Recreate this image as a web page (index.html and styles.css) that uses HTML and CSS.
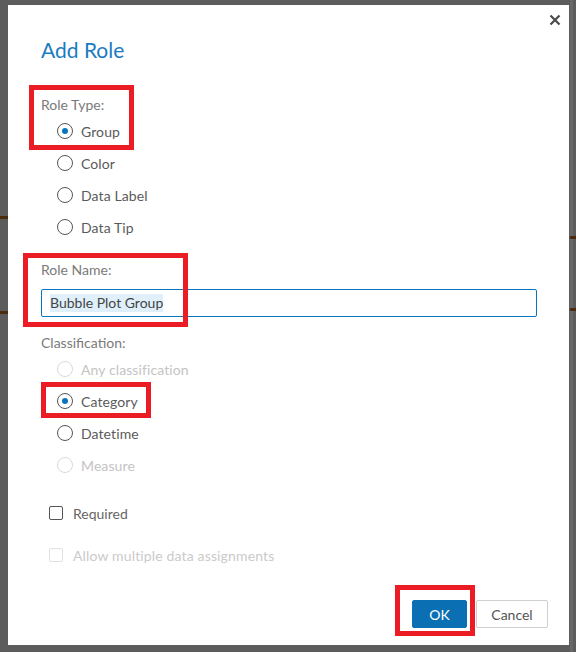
FILE: index.html
```
<!DOCTYPE html>
<html>
<head>
<meta charset="utf-8">
<link rel="stylesheet" href="styles.css">
</head>
<body>
<div class="dialog">
  <button class="close" aria-label="Close">
    <svg width="12" height="12" viewBox="0 0 12 12"><path d="M1.5 1.5 L10.5 10.5 M10.5 1.5 L1.5 10.5" stroke="#4a4a4a" stroke-width="2.2" fill="none"/></svg>
  </button>
  <h1 class="title">Add Role</h1>

  <div class="label">Role Type:</div>
  <div class="radio-group">
    <div class="radio-row checked"><span class="radio"></span><span class="rlabel">Group</span></div>
    <div class="radio-row"><span class="radio"></span><span class="rlabel">Color</span></div>
    <div class="radio-row"><span class="radio"></span><span class="rlabel">Data Label</span></div>
    <div class="radio-row"><span class="radio"></span><span class="rlabel">Data Tip</span></div>
  </div>

  <div class="label label-name">Role Name:</div>
  <div class="input"><span class="sel">Bubble Plot Group</span></div>

  <div class="label label-class">Classification:</div>
  <div class="radio-group">
    <div class="radio-row disabled"><span class="radio"></span><span class="rlabel">Any classification</span></div>
    <div class="radio-row checked"><span class="radio"></span><span class="rlabel">Category</span></div>
    <div class="radio-row"><span class="radio"></span><span class="rlabel">Datetime</span></div>
    <div class="radio-row disabled"><span class="radio"></span><span class="rlabel">Measure</span></div>
  </div>

  <div class="check-row check-required"><span class="check"></span><span class="clabel">Required</span></div>
  <div class="check-row disabled"><span class="check"></span><span class="clabel">Allow multiple data assignments</span></div>

  <div class="footer">
    <button class="btn btn-ok">OK</button>
    <button class="btn btn-cancel">Cancel</button>
  </div>

  <div class="mark mark-type"></div>
  <div class="mark mark-name"></div>
  <div class="mark mark-cat"></div>
  <div class="mark mark-ok"></div>
</div>
</body>
</html>
```
FILE: styles.css
```
html, body {
  margin: 0;
  padding: 0;
}
body {
  width: 576px;
  height: 652px;
  overflow: hidden;
  background-color: #5c5c5c;
  background-image:
    linear-gradient(#4a2c0c, #4a2c0c),
    linear-gradient(#4a2c0c, #4a2c0c),
    linear-gradient(#4a2c0c, #4a2c0c),
    linear-gradient(#4a2c0c, #4a2c0c),
    linear-gradient(#686868, #686868);
  background-size: 8px 3px, 8px 3px, 6px 3px, 6px 3px, 3px 652px;
  background-position: 0 216px, 0 311px, 570px 236px, 570px 308px, 570px 0;
  background-repeat: no-repeat;
  font-family: Lato, "Open Sans", "Liberation Sans", sans-serif;
  box-sizing: border-box;
  padding: 5px 0 0 8px;
}
.dialog {
  position: relative;
  width: 561px;
  height: 640px;
  background: #fff;
  box-sizing: border-box;
  padding: 31px 32px 17px 33px;
  display: flex;
  flex-direction: column;
}
.close {
  position: absolute;
  top: 9px;
  right: 8px;
  width: 12px;
  height: 12px;
  padding: 0;
  border: 0;
  background: transparent;
  display: flex;
}
.title {
  margin: 0;
  font-size: 21px;
  line-height: 28px;
  font-weight: 400;
  color: #1a7bc2;
}
.label {
  margin-top: 31px;
  font-size: 14px;
  line-height: 20px;
  color: #7a7a7a;
}
.label-name { margin-top: 17px; }
.label-class { margin-top: 16px; }
.radio-group {
  display: flex;
  flex-direction: column;
}
.radio-row {
  height: 32px;
  display: flex;
  align-items: center;
  padding-left: 16px;
  font-size: 14px;
  letter-spacing: 0.1px;
  color: #5a5a5a;
}
.radio {
  width: 16px;
  height: 16px;
  box-sizing: border-box;
  border: 1px solid #555;
  border-radius: 50%;
  display: flex;
  align-items: center;
  justify-content: center;
  margin-right: 8px;
  flex: none;
}
.checked .radio::after {
  content: "";
  width: 6px;
  height: 6px;
  border-radius: 50%;
  background: #0a74bd;
}
.radio-row.disabled { color: #c4c4c4; }
.radio-row.disabled .radio { border-color: #dadada; }
.input {
  margin-top: 9px;
  height: 28px;
  box-sizing: border-box;
  border: 1px solid #0a74bd;
  border-radius: 2px;
  display: flex;
  align-items: center;
  padding-left: 8px;
  font-size: 14px;
  color: #444;
}
.sel {
  background: #e0f0fb;
  line-height: 18px;
}
.check-row {
  height: 32px;
  display: flex;
  align-items: center;
  padding-left: 8px;
  font-size: 14px;
  color: #666;
}
.check-required { margin-top: 16px; }
.check-row.disabled { margin-top: 10px; color: #cacaca; letter-spacing: 0.15px; }
.check {
  width: 14px;
  height: 14px;
  box-sizing: border-box;
  border: 1.5px solid #555;
  border-radius: 2px;
  margin-right: 10px;
  flex: none;
}
.check-row.disabled .check { border: 1px solid #e0e0e0; }
.footer {
  margin-top: auto;
  display: flex;
  justify-content: flex-end;
  gap: 9px;
  margin-right: -11px;
}
.btn {
  height: 28px;
  box-sizing: border-box;
  border-radius: 2px;
  font-family: inherit;
  font-size: 14px;
  padding: 0;
}
.btn-ok {
  width: 55px;
  background: #0a6fb3;
  border: 1px solid #0a6fb3;
  color: #fff;
}
.btn-cancel {
  width: 72px;
  background: #fff;
  border: 1px solid #cfcfcf;
  color: #555;
}
.mark {
  position: absolute;
  border: 5px solid #ec1c24;
  box-sizing: border-box;
  pointer-events: none;
}
.mark-type { left: 21px; top: 80px; width: 105px; height: 65px; }
.mark-name { left: 15px; top: 248px; width: 165px; height: 74px; }
.mark-cat  { left: 33px; top: 377px; width: 110px; height: 36px; }
.mark-ok   { left: 387px; top: 580px; width: 80px; height: 51px; }
```
